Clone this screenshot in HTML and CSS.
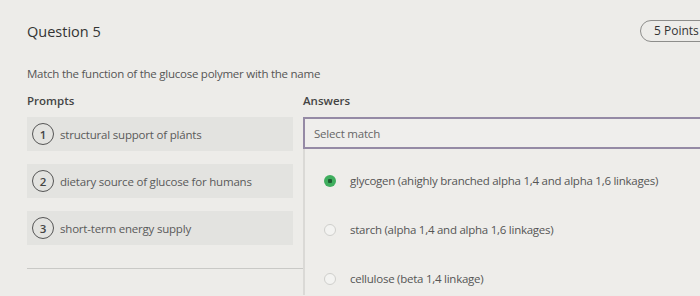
FILE: index.html
```html
<!DOCTYPE html>
<html lang="en">
<head>
  <meta charset="UTF-8" />
  <meta name="viewport" content="width=device-width, initial-scale=1.0"/>
  <title>Question 5</title>
  <link rel="stylesheet" href="styles.css">
</head>
<body>
  <div class="quiz">
    <div class="quiz-head">
      <h2>Question 5</h2>
      <span class="points">5 Points</span>
    </div>

    <p class="instructions">Match the function of the glucose polymer with the name</p>

    <div class="match">
      <div class="prompts">
        <div class="col-title">Prompts</div>
        <div class="prompt"><span class="num">1</span>structural support of plánts</div>
        <div class="prompt"><span class="num">2</span>dietary source of glucose for humans</div>
        <div class="prompt"><span class="num">3</span>short-term energy supply</div>
        <div class="divider"></div>
      </div>

      <div class="answers">
        <div class="col-title">Answers</div>
        <div class="select">
          <span>Select match</span>
          <span class="arrow"></span>
        </div>
        <!-- open dropdown -->
        <div class="options">
          <div class="option"><span class="radio checked"></span>glycogen (ahighly branched alpha 1,4 and alpha 1,6 linkages)</div>
          <div class="option"><span class="radio"></span>starch (alpha 1,4 and alpha 1,6 linkages)</div>
          <div class="option"><span class="radio"></span>cellulose (beta 1,4 linkage)</div>
        </div>
      </div>
    </div>
  </div>
</body>
</html>
```

FILE: styles.css
```css
html, body {
  overflow: hidden;
}

body {
  margin: 0;
  background: #edece9;
  font-family: 'Open Sans', 'Noto Sans', sans-serif;
  color: #555;
  height: 296px;
}

.quiz {
  width: 693px;
  padding: 0 0 0 27px;
}

.quiz-head {
  display: flex;
  justify-content: space-between;
  align-items: center;
  padding-top: 20px;
  height: 22px;
}

h2 {
  margin: 0;
  font-size: 14.5px;
  font-weight: normal;
  color: #333;
}

.points {
  box-sizing: border-box;
  height: 22px;
  width: 80px;
  padding: 0 0 0 13px;
  line-height: 20px;
  border: 1px solid #8d8d8b;
  border-radius: 11px;
  font-size: 12px;
  color: #333;
}

.instructions {
  margin: 24px 0 0;
  font-size: 11.5px;
  line-height: 16px;
  letter-spacing: -0.25px;
}

.match {
  display: grid;
  grid-template-columns: 276px 1fr;
}

.col-title {
  font-size: 11.5px;
  font-weight: 600;
  color: #444;
  line-height: 16px;
  margin: 11px 0 0;
  height: 24px;
}

.prompts {
  display: flex;
  flex-direction: column;
}

.prompt {
  display: flex;
  align-items: center;
  height: 34px;
  margin-right: 10px;
  margin-bottom: 13px;
  background: #e3e3e0;
  font-size: 11.5px;
  letter-spacing: -0.2px;
  color: #5a5a5a;
}

.num {
  box-sizing: border-box;
  width: 22px;
  height: 22px;
  margin: 0 6px 0 5px;
  border: 1.5px solid #555;
  border-radius: 50%;
  display: flex;
  align-items: center;
  justify-content: center;
  font-size: 11.5px;
  font-weight: 600;
  letter-spacing: 0;
  color: #444;
}

.divider {
  margin: 10px -1px 0 0;
  border-top: 1px solid #c9c9c6;
}

.answers {
  display: flex;
  flex-direction: column;
}

.select {
  box-sizing: border-box;
  height: 32px;
  display: flex;
  align-items: center;
  justify-content: space-between;
  padding: 0 0 0 9px;
  border: 2px solid #958aa5;
  border-right: none;
  background: #efeeec;
  font-size: 11.5px;
  letter-spacing: -0.2px;
  color: #666;
}

.arrow {
  width: 18px;
  height: 16px;
  background: #dcdcda;
  position: relative;
}

.arrow::after {
  content: "";
  position: absolute;
  left: 5px;
  top: 5px;
  border-left: 4px solid transparent;
  border-right: 4px solid transparent;
  border-top: 6px solid #333;
}

.options {
  border-left: 2px solid #dad9d6;
  background: #eeedea;
  padding-top: 7px;
  height: 139px;
  overflow: hidden;
}

.option {
  display: flex;
  align-items: center;
  flex-shrink: 0;
  height: 49px;
  font-size: 11.5px;
  letter-spacing: -0.25px;
  color: #555;
}

.radio {
  box-sizing: border-box;
  width: 12px;
  height: 12px;
  margin: 0 14px 0 19px;
  border-radius: 50%;
  border: 1px solid #cfcfcc;
  background: #f3f3f1;
}

.radio.checked {
  border: none;
  background: radial-gradient(circle, #1f5c33 0 2px, #3fae5e 2.5px);
}
```
